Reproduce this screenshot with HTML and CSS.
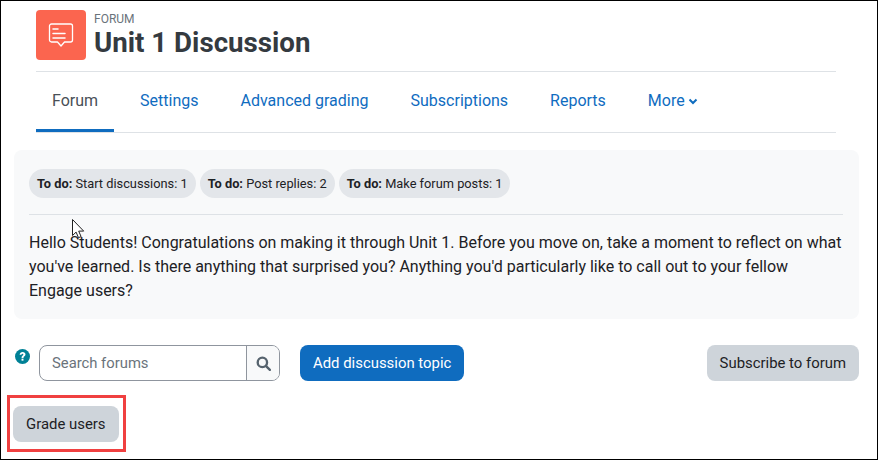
FILE: index.html
```html
<!DOCTYPE html>
<html lang="en">
<head>
<meta charset="utf-8">
<title>Unit 1 Discussion</title>
<link rel="stylesheet" href="styles.css">
</head>
<body>
<div class="frame">
  <div class="head-wrap">
    <header class="page-head">
      <div class="activity-icon">
        <svg width="28" height="28" viewBox="0 0 28 28" fill="none" stroke="#fff" stroke-width="1.300" stroke-linecap="round" stroke-linejoin="round">
          <path d="M4.500 3h19a2 2 0 0 1 2 2v14a2 2 0 0 1-2 2H17.500L14 25l-3.500-4H4.500a2 2 0 0 1-2-2V5a2 2 0 0 1 2-2z"/>
          <path d="M6 8h5M6 12.500h12M6 17h12" stroke-width="1.500"/>
        </svg>
      </div>
      <div class="head-text">
        <div class="eyebrow">FORUM</div>
        <h1>Unit 1 Discussion</h1>
      </div>
    </header>
    <nav class="tabs">
      <a class="tab active">Forum</a>
      <a class="tab">Settings</a>
      <a class="tab">Advanced grading</a>
      <a class="tab">Subscriptions</a>
      <a class="tab">Reports</a>
      <a class="tab">More<svg class="caret" width="10" height="7" viewBox="0 0 10 7" fill="none" stroke="#0f6cbf" stroke-width="2"><path d="M1.500 1.500 5 5l3.500-3.500"/></svg></a>
    </nav>
  </div>
  <section class="card">
    <div class="badges">
      <span class="badge"><b>To do:</b> Start discussions: 1</span>
      <span class="badge"><b>To do:</b> Post replies: 2</span>
      <span class="badge"><b>To do:</b> Make forum posts: 1</span>
    </div>
    <p class="intro">Hello Students! Congratulations on making it through Unit 1. Before you move on, take a moment to reflect on what you've learned. Is there anything that surprised you? Anything you'd particularly like to call out to your fellow Engage users?</p>
  </section>
  <div class="actions">
    <svg class="help" width="15" height="15" viewBox="0 0 14 14">
      <circle cx="7" cy="7" r="7" fill="#008196"/>
      <path d="M4.300 5.300C4.400 3.700 5.600 2.700 7.100 2.700c1.600 0 2.700 1 2.700 2.300 0 1.900-1.900 1.800-1.900 3.300H6.100c0-2.200 1.700-2.200 1.700-3.200 0-.5-.3-.7-.8-.7-.6 0-.9.400-1 1z" fill="#fff"/>
      <rect x="6.100" y="9" width="1.800" height="1.900" fill="#fff"/>
    </svg>
    <div class="search">
      <span class="search-field">Search forums</span>
      <span class="search-btn">
        <svg width="15" height="15" viewBox="0 0 16 16" fill="none" stroke="#56636e" stroke-width="2.500"><circle cx="6.800" cy="6.800" r="5"/><path d="m10.500 10.500 4.300 4.300" stroke-linecap="round"/></svg>
      </span>
    </div>
    <a class="btn primary">Add discussion topic</a>
    <a class="btn secondary push">Subscribe to forum</a>
  </div>
  <div class="highlight">
    <a class="btn secondary">Grade users</a>
  </div>
  <svg class="cursor" width="13" height="21" viewBox="0 0 13 21"><path d="M.5.500v16l3.600-3.400 2.400 5.600 2.600-1.100-2.400-5.500h5z" fill="#fff" stroke="#222" stroke-width="1"/></svg>
</div>
</body>
</html>
```
FILE: styles.css
```css
* { box-sizing: border-box; }
html, body { margin: 0; padding: 0; }
body {
  width: 878px;
  height: 460px;
  overflow: hidden;
  background: #fff;
  font-family: Roboto, "Liberation Sans", sans-serif;
  font-size: 15px;
  line-height: 24px;
  color: #1d2125;
}
.frame {
  position: relative;
  width: 878px;
  height: 460px;
  border: 1px solid #000;
}
.head-wrap {
  margin: 0 41px 0 35px;
  height: 132px;
}
.page-head {
  display: flex;
  gap: 8px;
  height: 71px;
  padding-top: 9px;
  border-bottom: 1px solid #dee2e6;
}
.activity-icon {
  width: 50px;
  height: 50px;
  border-radius: 4px;
  background: #fb654f;
  display: flex;
  align-items: center;
  justify-content: center;
}
.head-text { margin-top: 2px; }
.eyebrow {
  font-size: 12px;
  line-height: 15px;
  color: #6a737b;
}
h1 {
  margin: 0;
  font-size: 27.7px;
  line-height: 32px;
  font-weight: 700;
  color: #343a40;
}
.tabs {
  display: flex;
  gap: 10px;
  height: 61px;
  border-bottom: 1px solid #dee2e6;
}
.tab {
  padding: 0 16px;
  height: 60px;
  line-height: 57px;
  font-size: 16px;
  color: #0f6cbf;
  white-space: nowrap;
}
.tab.active {
  color: #495057;
  border-bottom: 3px solid #0f6cbf;
}
.caret { margin-left: 3px; vertical-align: 1px; }
.card {
  margin: 17px 18px 0 13px;
  height: 169px;
  padding: 19px 16px 0 15px;
  border-radius: 8px;
  background: #f8f9fa;
}
.badges {
  display: flex;
  gap: 4px;
  height: 46px;
  border-bottom: 1px solid #dee2e6;
}
.badge {
  height: 29px;
  padding: 0 8px;
  border-radius: 15px;
  background: #e3e6ea;
  font-size: 12.8px;
  line-height: 29px;
  white-space: nowrap;
}
.badge b { font-weight: 700; }
.intro {
  margin: 16px 0 0;
  font-size: 16px;
  line-height: 24px;
  color: #1d2125;
}
.actions {
  display: flex;
  align-items: flex-start;
  margin: 26px 18px 0 14px;
  height: 36px;
}
.help { margin: 4px 9px 0 0; flex: none; }
.search {
  display: flex;
  width: 241px;
  height: 36px;
  border: 1px solid #8f959e;
  border-radius: 8px;
  overflow: hidden;
  margin-right: 20px;
}
.search-field {
  flex: 1;
  padding-left: 12px;
  line-height: 34px;
  font-size: 14.8px;
  color: #6a737b;
}
.search-btn {
  width: 33px;
  border-left: 1px solid #8f959e;
  background: #f8f9fa;
  display: flex;
  align-items: center;
  justify-content: center;
}
.btn {
  display: inline-block;
  height: 36px;
  padding: 0 13px;
  border-radius: 8px;
  font-size: 14.9px;
  line-height: 36px;
  white-space: nowrap;
}
.primary { background: #0f6cbf; color: #fff; }
.secondary { background: #ced4da; color: #1d2125; }
.push { margin-left: auto; }
.highlight {
  width: 119px;
  height: 57px;
  margin: 14px 0 0 6px;
  padding: 8px 0 0 3px;
  border: 3px solid #f04040;
}
.cursor {
  position: absolute;
  left: 71px;
  top: 218px;
}
```
